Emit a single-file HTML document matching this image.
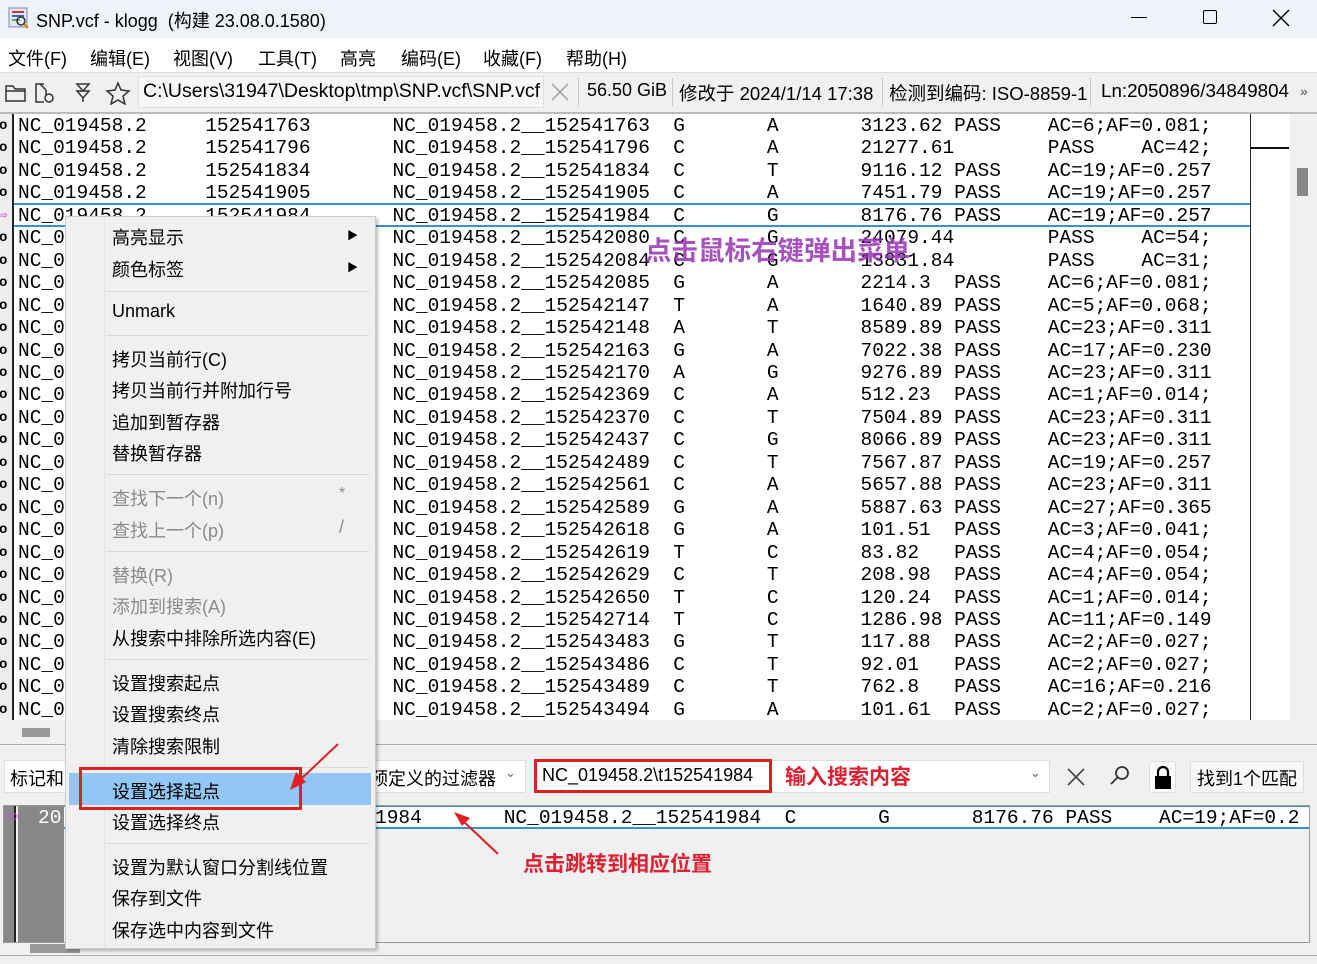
<!DOCTYPE html>
<html><head><meta charset="utf-8">
<style>
*{margin:0;padding:0;box-sizing:border-box}
body{width:1317px;height:964px;overflow:hidden;background:#f0f0f0;position:relative;font-family:"Liberation Sans","Noto Sans CJK SC",sans-serif;color:#000}
.a{position:absolute;white-space:pre}
.mono{font-family:"Liberation Mono","DejaVu Sans Mono",monospace;font-size:19.5px;line-height:22.46px}
.ui{font-size:18px}
.mi{position:absolute;left:46px;font-size:18px;white-space:pre}
.dis{color:#8a8a8a}
.sep{position:absolute;left:40px;right:6px;height:1px;background:#d8d8d8}
</style></head><body>
<!-- title bar -->
<div class="a" style="left:0;top:0;width:1317px;height:38px;background:#eff3f9"></div>
<svg class="a" style="left:8px;top:7px" width="22" height="22"><rect x="1" y="1" width="18" height="19" fill="#dfe6f2" stroke="#7a8aa8"/><rect x="4" y="4" width="12" height="2" fill="#c33"/><rect x="4" y="8" width="12" height="2" fill="#36c"/><rect x="4" y="12" width="8" height="2" fill="#6a6"/><circle cx="13" cy="14" r="4" fill="none" stroke="#333" stroke-width="1.5"/><line x1="16" y1="17" x2="20" y2="21" stroke="#c80" stroke-width="2"/></svg>
<div class="a" style="left:36px;top:7px;font-size:18px">SNP.vcf - klogg  (构建 23.08.0.1580)</div>
<div class="a" style="left:1131px;top:17px;width:16px;height:1px;background:#000"></div>
<div class="a" style="left:1203px;top:10px;width:14px;height:14px;border:1.5px solid #000;border-radius:2px"></div>
<svg class="a" style="left:1272px;top:9px" width="18" height="18"><path d="M1 1L17 17M17 1L1 17" stroke="#000" stroke-width="1.4"/></svg>
<!-- menu bar -->
<div class="a" style="left:0;top:38px;width:1317px;height:34px;background:#fff"></div>
<div class="a ui" style="left:8px;top:45px">文件(F)</div>
<div class="a ui" style="left:90px;top:45px">编辑(E)</div>
<div class="a ui" style="left:173px;top:45px">视图(V)</div>
<div class="a ui" style="left:258px;top:45px">工具(T)</div>
<div class="a ui" style="left:340px;top:45px">高亮</div>
<div class="a ui" style="left:401px;top:45px">编码(E)</div>
<div class="a ui" style="left:483px;top:45px">收藏(F)</div>
<div class="a ui" style="left:566px;top:45px">帮助(H)</div>
<!-- toolbar -->
<div class="a" style="left:0;top:72px;width:1317px;height:1px;background:#ddd"></div>
<svg class="a" style="left:4px;top:81px" width="130" height="24" fill="none" stroke="#333" stroke-width="1.5">
<path d="M2 5h7l2 3h10v12H2z M2 10h19"/>
<path d="M40 3h-8v18h8 M34 3v0 M36 3l6 6v5" /><circle cx="45" cy="17" r="4"/>
<path d="M73 3h12l-6 7z M73 10h12l-6 7z M79 17v4"/>
<path d="M114 2l3 7 8 1-6 5 2 8-7-4-7 4 2-8-6-5 8-1z"/>
</svg>
<div class="a" style="left:138px;top:76px;width:406px;height:32px;background:#f7f7f7;border:1px solid #e0e0e0"></div>
<div class="a" style="left:143px;top:80px;font-size:19.5px">C:\Users\31947\Desktop\tmp\SNP.vcf\SNP.vcf</div>
<svg class="a" style="left:550px;top:82px" width="20" height="20"><path d="M2 2L18 18M18 2L2 18" stroke="#999" stroke-width="1.4"/></svg>
<div class="a" style="left:578px;top:78px;width:1px;height:28px;background:#ccc"></div>
<div class="a ui" style="left:587px;top:80px">56.50 GiB</div>
<div class="a" style="left:672px;top:78px;width:1px;height:28px;background:#ccc"></div>
<div class="a" style="left:679px;top:80px;font-size:18.5px">修改于 2024/1/14 17:38</div>
<div class="a" style="left:882px;top:78px;width:1px;height:28px;background:#ccc"></div>
<div class="a" style="left:889px;top:80px;font-size:18.5px">检测到编码: ISO-8859-1</div>
<div class="a" style="left:1090px;top:78px;width:1px;height:28px;background:#ccc"></div>
<div class="a" style="left:1101px;top:80px;font-size:18.8px">Ln:2050896/34849804</div>
<div class="a" style="left:1300px;top:83px;font-size:14px;color:#555">»</div>
<!-- main view -->
<div class="a" style="left:0;top:112px;width:1317px;height:2px;background:#bbb"></div>
<div class="a" style="left:0;top:114px;width:1290px;height:606px;background:#fff"></div>
<div class="a" style="left:0;top:114px;width:14px;height:606px;background:#eee;border-right:2px solid #222"></div>
<div class="a" style="left:1250px;top:114px;width:40px;height:606px;border-left:1.5px solid #222;background:#fff"></div>
<div class="a" style="left:1251px;top:147px;width:38px;height:2px;background:#111"></div>
<div class="a" style="left:1290px;top:114px;width:27px;height:606px;background:#f0f0f0"></div>
<div class="a" style="left:1297px;top:168px;width:11px;height:28px;background:#888"></div>
<div class="a" style="left:14px;top:203px;width:1236px;height:1.5px;background:#3b8fd6"></div>
<div class="a" style="left:14px;top:225px;width:1236px;height:1.5px;background:#3b8fd6"></div>
<div class="a mono" style="left:-1px;top:115px;font-size:14px;font-weight:bold">o
o
o
o
<span style="color:#e040e0">⇨</span>
o
o
o
o
o
o
o
o
o
o
o
o
o
o
o
o
o
o
o
o
o
o</div>
<div class="a mono" style="left:18px;top:115px">NC_019458.2     152541763       NC_019458.2__152541763  G       A       3123.62 PASS    AC=6;AF=0.081;
NC_019458.2     152541796       NC_019458.2__152541796  C       A       21277.61        PASS    AC=42;
NC_019458.2     152541834       NC_019458.2__152541834  C       T       9116.12 PASS    AC=19;AF=0.257
NC_019458.2     152541905       NC_019458.2__152541905  C       A       7451.79 PASS    AC=19;AF=0.257
NC_019458.2     152541984       NC_019458.2__152541984  C       G       8176.76 PASS    AC=19;AF=0.257
NC_019458.2     152542080       NC_019458.2__152542080  C       G       24079.44        PASS    AC=54;
NC_019458.2     152542084       NC_019458.2__152542084  C       G       13831.84        PASS    AC=31;
NC_019458.2     152542085       NC_019458.2__152542085  G       A       2214.3  PASS    AC=6;AF=0.081;
NC_019458.2     152542147       NC_019458.2__152542147  T       A       1640.89 PASS    AC=5;AF=0.068;
NC_019458.2     152542148       NC_019458.2__152542148  A       T       8589.89 PASS    AC=23;AF=0.311
NC_019458.2     152542163       NC_019458.2__152542163  G       A       7022.38 PASS    AC=17;AF=0.230
NC_019458.2     152542170       NC_019458.2__152542170  A       G       9276.89 PASS    AC=23;AF=0.311
NC_019458.2     152542369       NC_019458.2__152542369  C       A       512.23  PASS    AC=1;AF=0.014;
NC_019458.2     152542370       NC_019458.2__152542370  C       T       7504.89 PASS    AC=23;AF=0.311
NC_019458.2     152542437       NC_019458.2__152542437  C       G       8066.89 PASS    AC=23;AF=0.311
NC_019458.2     152542489       NC_019458.2__152542489  C       T       7567.87 PASS    AC=19;AF=0.257
NC_019458.2     152542561       NC_019458.2__152542561  C       A       5657.88 PASS    AC=23;AF=0.311
NC_019458.2     152542589       NC_019458.2__152542589  G       A       5887.63 PASS    AC=27;AF=0.365
NC_019458.2     152542618       NC_019458.2__152542618  G       A       101.51  PASS    AC=3;AF=0.041;
NC_019458.2     152542619       NC_019458.2__152542619  T       C       83.82   PASS    AC=4;AF=0.054;
NC_019458.2     152542629       NC_019458.2__152542629  C       T       208.98  PASS    AC=4;AF=0.054;
NC_019458.2     152542650       NC_019458.2__152542650  T       C       120.24  PASS    AC=1;AF=0.014;
NC_019458.2     152542714       NC_019458.2__152542714  T       C       1286.98 PASS    AC=11;AF=0.149
NC_019458.2     152543483       NC_019458.2__152543483  G       T       117.88  PASS    AC=2;AF=0.027;
NC_019458.2     152543486       NC_019458.2__152543486  C       T       92.01   PASS    AC=2;AF=0.027;
NC_019458.2     152543489       NC_019458.2__152543489  C       T       762.8   PASS    AC=16;AF=0.216
NC_019458.2     152543494       NC_019458.2__152543494  G       A       101.61  PASS    AC=2;AF=0.027;</div>
<div class="a" style="left:645px;top:229px;font-size:26.5px;font-weight:bold;color:rgba(150,50,180,0.85)">点击鼠标右键弹出菜单</div>
<!-- horizontal scrollbar -->
<div class="a" style="left:0;top:720px;width:1290px;height:24px;background:#f0f0f0"></div>
<div class="a" style="left:22px;top:728px;width:28px;height:9px;background:#999"></div>
<div class="a" style="left:0;top:744px;width:1317px;height:1px;background:#aaa"></div>
<!-- search bar -->
<div class="a" style="left:4px;top:760px;width:70px;height:33px;background:#fff;border:1px solid #ddd"></div>
<div class="a ui" style="left:10px;top:765px">标记和</div>
<div class="a" style="left:366px;top:760px;width:160px;height:33px;background:#fff;border:1px solid #ddd"></div>
<div class="a ui" style="left:370px;top:765px">预定义的过滤器</div>
<div class="a" style="left:505px;top:765px;font-size:13px;color:#666">⌄</div>
<div class="a" style="left:534px;top:760px;width:516px;height:33px;background:#fff;border:1px solid #ddd"></div>
<div class="a" style="left:534px;top:759px;width:238px;height:34px;border:3px solid #e02020"></div>
<div class="a ui" style="left:542px;top:765px">NC_019458.2\t152541984</div>
<div class="a" style="left:785px;top:761px;font-size:21px;font-weight:bold;color:#e02030">输入搜索内容</div>
<div class="a" style="left:1030px;top:765px;font-size:13px;color:#666">⌄</div>
<svg class="a" style="left:1066px;top:767px" width="20" height="20"><path d="M2 2L18 18M18 2L2 18" stroke="#444" stroke-width="1.6"/></svg>
<svg class="a" style="left:1108px;top:764px" width="24" height="24" fill="none" stroke="#333" stroke-width="1.8"><circle cx="14" cy="9" r="6"/><path d="M10 13L3 20"/></svg>
<div class="a" style="left:1149px;top:761px;width:27px;height:32px;background:#fafafa;border:1px solid #ddd;border-radius:3px"></div>
<svg class="a" style="left:1152px;top:765px" width="22" height="26"><path d="M6 11V7a5 5 0 0 1 10 0v4" fill="none" stroke="#000" stroke-width="2.2"/><rect x="3" y="11" width="16" height="13" fill="#000"/></svg>
<div class="a" style="left:1190px;top:761px;width:114px;height:32px;background:#f7f7f7;border:1px solid #ddd;border-radius:2px"></div>
<div class="a ui" style="left:1197px;top:765px">找到1个匹配</div>
<!-- lower view -->
<div class="a" style="left:3px;top:805px;width:1307px;height:138px;border:1px solid #999;background:#f0f0f0"></div>
<div class="a" style="left:4px;top:806px;width:12px;height:136px;background:#888;border-right:2px solid #222"></div>
<div class="a" style="left:18px;top:806px;width:46px;height:136px;background:#888"></div>
<div class="a" style="left:5px;top:807px;color:#e040e0;font-size:14px;font-weight:bold">⇨</div>
<div class="a mono" style="left:38px;top:807px;color:#fff">20</div>
<div class="a" style="left:64px;top:806px;width:1245px;height:23px;background:#fff;border-top:1.5px solid #3b8fd6;border-bottom:2px solid #3b8fd6"></div>
<div class="a mono" style="left:375px;top:807px">1984       NC_019458.2__152541984  C       G       8176.76 PASS    AC=19;AF=0.2</div>
<div class="a" style="left:523px;top:848px;font-size:21px;font-weight:bold;color:#e02030">点击跳转到相应位置</div>
<svg class="a" style="left:440px;top:800px" width="70" height="60"><path d="M58 54L22 20" stroke="#e02020" stroke-width="2"/><path d="M14 12L30 18L22 26z" fill="#e02020"/></svg>
<div class="a" style="left:30px;top:944px;width:50px;height:9px;background:#999"></div>
<div class="a" style="left:0;top:955px;width:1317px;height:1px;background:#aaa"></div>
<!-- context menu -->
<div class="a" style="left:65px;top:216px;width:311px;height:733px;background:#f0f0f0;border:1px solid #ccc;box-shadow:2px 2px 3px rgba(0,0,0,0.25)">
<div class="a" style="left:38px;top:0;width:1px;height:731px;background:#e4e4e4"></div>
<div class="mi" style="top:7px">高亮显示</div><div class="a" style="left:281px;top:10px;font-size:11px">▶</div>
<div class="mi" style="top:39px">颜色标签</div><div class="a" style="left:281px;top:42px;font-size:11px">▶</div>
<div class="sep" style="top:74px"></div>
<div class="mi" style="top:84px">Unmark</div>
<div class="sep" style="top:118px"></div>
<div class="mi" style="top:129px">拷贝当前行(C)</div>
<div class="mi" style="top:160px">拷贝当前行并附加行号</div>
<div class="mi" style="top:192px">追加到暂存器</div>
<div class="mi" style="top:223px">替换暂存器</div>
<div class="sep" style="top:257px"></div>
<div class="mi dis" style="top:268px">查找下一个(n)</div><div class="a dis" style="left:273px;top:268px;font-size:16px">*</div>
<div class="mi dis" style="top:300px">查找上一个(p)</div><div class="a dis" style="left:273px;top:300px;font-size:18px">/</div>
<div class="sep" style="top:334px"></div>
<div class="mi dis" style="top:345px">替换(R)</div>
<div class="mi dis" style="top:376px">添加到搜索(A)</div>
<div class="mi" style="top:408px">从搜索中排除所选内容(E)</div>
<div class="sep" style="top:442px"></div>
<div class="mi" style="top:453px">设置搜索起点</div>
<div class="mi" style="top:484px">设置搜索终点</div>
<div class="mi" style="top:516px">清除搜索限制</div>
<div class="sep" style="top:550px"></div>
<div class="a" style="left:3px;top:556px;width:302px;height:32px;background:#92c7f5"></div>
<div class="mi" style="top:561px">设置选择起点</div>
<div class="mi" style="top:592px">设置选择终点</div>
<div class="sep" style="top:626px"></div>
<div class="mi" style="top:637px">设置为默认窗口分割线位置</div>
<div class="mi" style="top:668px">保存到文件</div>
<div class="mi" style="top:700px">保存选中内容到文件</div>
</div>
<div class="a" style="left:79px;top:767px;width:223px;height:43px;border:3px solid #e02020"></div>
<svg class="a" style="left:280px;top:740px" width="70" height="60"><path d="M58 4L20 40" stroke="#e02020" stroke-width="2"/><path d="M10 50L16 32L26 42z" fill="#e02020"/></svg>
</body></html>
